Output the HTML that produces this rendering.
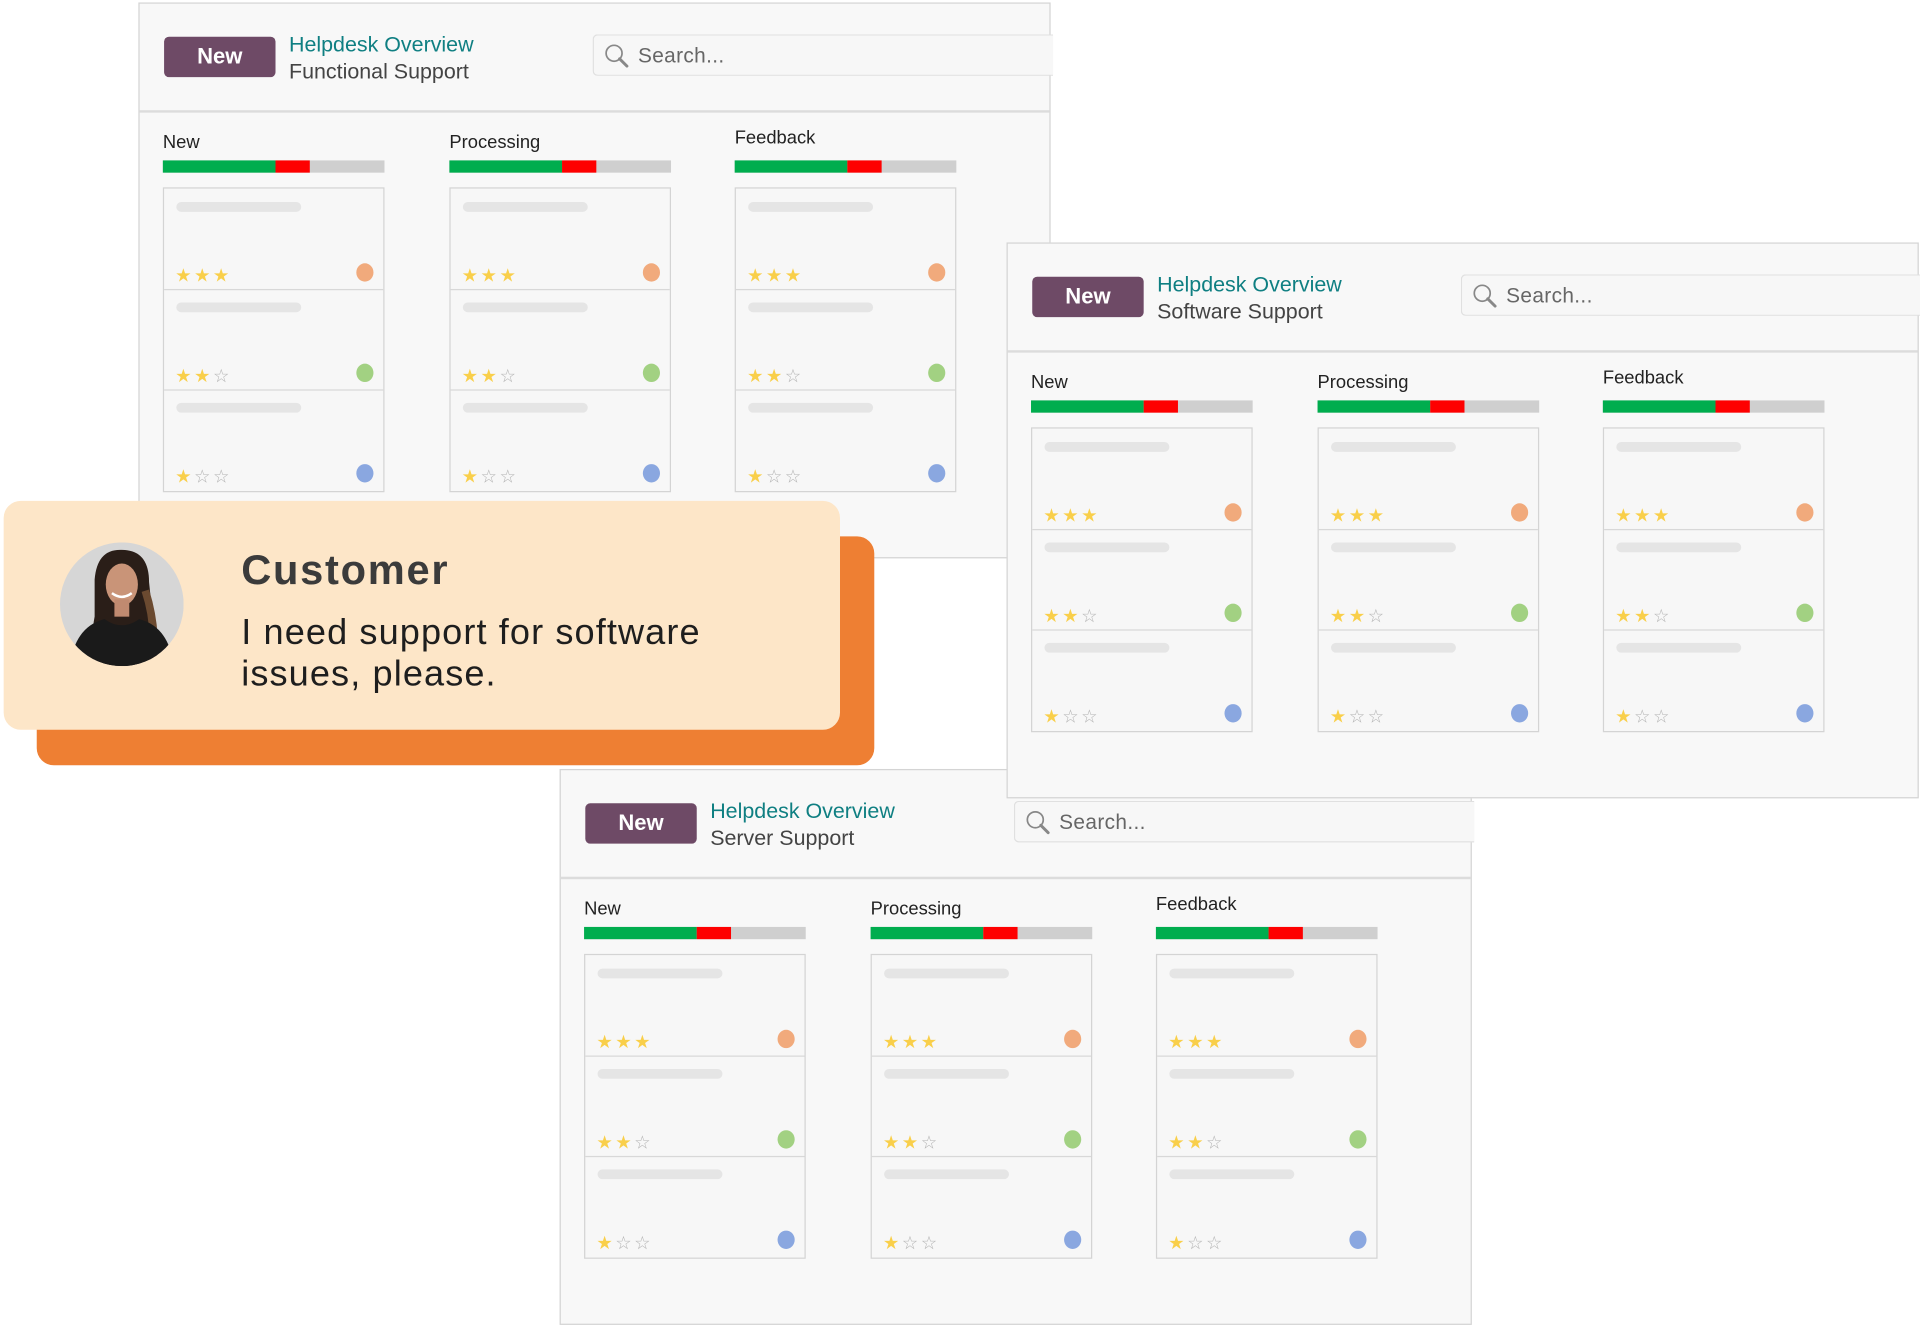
<!DOCTYPE html>
<html><head><meta charset="utf-8">
<style>
*{box-sizing:border-box;margin:0;padding:0}
html,body{width:1920px;height:1326px;overflow:hidden;background:#fff;font-family:"Liberation Sans",sans-serif}
#w{position:absolute;left:0;top:0;width:1568px;height:1083px;transform:scale(1.22449);transform-origin:0 0}
.p{position:absolute;width:745px;height:454px;background:#f8f8f8;border:1.5px solid #d4d4d4}
.hd{position:absolute;left:0;top:0;width:100%;height:89px;border-bottom:2px solid #dcdcdc}
.btn{position:absolute;left:20px;top:27px;width:91px;height:33px;background:#6e4a66;border-radius:4px;color:#fff;font-weight:bold;font-size:18px;line-height:33px;text-align:center}
.t1{position:absolute;left:122px;top:23px;font-size:17.5px;color:#0f7f82}
.t2{position:absolute;left:122px;top:45px;font-size:17.5px;color:#444}
.sr{position:absolute;left:370px;top:25px;width:376px;height:34px;border:1px solid #e0e0e0;border-right:none;border-radius:4px 0 0 4px;background:#f7f7f7}
.sr span{position:absolute;left:36px;top:7px;font-size:17px;color:#666;letter-spacing:.3px}
.sr svg{position:absolute;left:8px;top:6px}
.col{position:absolute;top:0;width:181px}
.h{position:absolute;left:0;font-size:15px;color:#222}
.bar{position:absolute;left:0;top:128px;width:181px;height:10px;background:#cfcfcf}
.bar i{position:absolute;top:0;height:10px}
.cards{position:absolute;left:0;top:150px;width:181px;height:249px;border:1.5px solid #d4d4d4;background:#f7f7f7}
.r{position:absolute;left:0;width:100%;height:83px;border-bottom:1.5px solid #d8d8d8}
.r:last-child{border-bottom:none}
.sk{position:absolute;left:10px;top:11px;width:102px;height:8px;border-radius:4px;background:#e5e5e5}
.st{position:absolute;left:9px;top:62px;font-family:"DejaVu Sans",sans-serif;font-size:15px;letter-spacing:2px;color:#f9cf4a}
.st b{font-weight:normal;color:#b5b5b5}
.d{position:absolute;right:8px;top:61px;width:14px;height:15px;border-radius:50%}
.card{position:absolute;border-radius:14px}
</style></head><body><div id="w">

<div class="p" style="left:113px;top:2px;z-index:1" id="p1"></div>
<div class="p" style="left:457px;top:628px;z-index:2" id="p3"></div>
<div class="p" style="left:822px;top:198px;z-index:3" id="p2"></div>

<div class="card" style="left:30px;top:438px;width:684px;height:187px;background:#ee7f33;z-index:4"></div>
<div class="card" style="left:3px;top:409px;width:683px;height:187px;background:#fde6c8;z-index:5">
 <svg style="position:absolute;left:46px;top:34px" width="101" height="101" viewBox="0 0 100 100">
  <defs><clipPath id="c"><circle cx="50" cy="50" r="50"/></clipPath></defs>
  <g clip-path="url(#c)">
   <rect width="100" height="100" fill="#d6d6d6"/>
   <path d="M28 30 Q30 5 50 6 Q72 6 72 32 L76 70 Q80 90 72 100 L30 100 Q24 80 28 60 Z" fill="#2a1e18"/>
   <path d="M66 40 Q76 70 70 100 L78 100 Q82 70 72 38Z" fill="#6b4a30"/>
   <ellipse cx="50" cy="34" rx="13" ry="17" fill="#c99478"/>
   <rect x="44" y="46" width="12" height="14" fill="#c08a70"/>
   <path d="M8 100 Q12 68 36 62 Q50 72 64 62 Q88 68 92 100Z" fill="#1a1a1a"/>
   <path d="M42 41 Q50 47 58 41" stroke="#fff" stroke-width="2" fill="none"/>
  </g>
 </svg>
 <div style="position:absolute;left:194px;top:38px;font-size:34px;font-weight:bold;color:#3b3b3b;letter-spacing:1.4px">Customer</div>
 <div style="position:absolute;left:194px;top:91px;font-size:29.5px;line-height:34px;color:#1e1e1e;letter-spacing:.9px">I need support for software<br>issues, please.</div>
</div>

<script>
function panel(id,sub){
 var cols=[["New",105,19],["Processing",105,253],["Feedback",101,486]];
 var h='<div class="hd"><div class="btn">New</div><div class="t1">Helpdesk Overview</div><div class="t2">'+sub+'</div>'+
 '<div class="sr"><svg width="22" height="22" viewBox="0 0 22 22"><circle cx="8.5" cy="8.5" r="6.5" fill="none" stroke="#888" stroke-width="1.4"/><path d="M13 13 L19 19" stroke="#888" stroke-width="2.4" stroke-linecap="round"/></svg><span>Search...</span></div></div>';
 var stars=['★★★','★★<b>☆</b>','★<b>☆☆</b>'],dc=['#f1aa7c','#a2d182','#8aa7e0'];
 cols.forEach(function(c){
  h+='<div class="col" style="left:'+c[2]+'px"><div class="h" style="top:'+c[1]+'px">'+c[0]+'</div>'+
  '<div class="bar"><i style="left:0;width:92px;background:#00ad4e"></i><i style="left:92px;width:28px;background:#fe0000"></i></div><div class="cards">';
  for(var i=0;i<3;i++) h+='<div class="r" style="top:'+(i*82)+'px"><div class="sk"></div><div class="st">'+stars[i]+'</div><div class="d" style="background:'+dc[i]+'"></div></div>';
  h+='</div></div>';
 });
 document.getElementById(id).innerHTML=h;
}
panel("p1","Functional Support");panel("p2","Software Support");panel("p3","Server Support");
</script>
</div></body></html>
